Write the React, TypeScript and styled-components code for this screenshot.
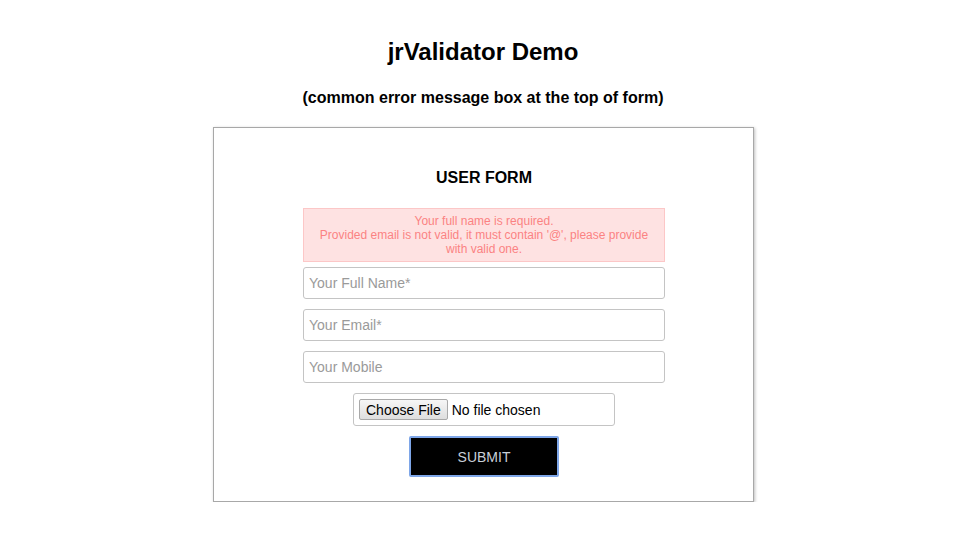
import React from "react";
import styled, { createGlobalStyle } from "styled-components";

const Global = createGlobalStyle`
  html, body { margin: 0; padding: 0; background: #fff; }
  body { font-family: "Liberation Sans", Arial, sans-serif; color: #000; }
`;

const Page = styled.div`
  display: flex;
  flex-direction: column;
  align-items: center;
  padding-top: 38px;
  padding-left: 2px;
`;

const Title = styled.h1`
  margin: 0;
  font-size: 24px;
  line-height: 28px;
  font-weight: bold;
`;

const Subtitle = styled.h4`
  margin: 23px 0 0;
  font-size: 16px;
  line-height: 18px;
  font-weight: bold;
`;

const FormCard = styled.form`
  margin-top: 20px;
  width: 537px;
  border: 1px solid #a8a8a8;
  box-shadow: 1px 1px 3px rgba(0, 0, 0, 0.25);
  padding: 41px 0 24px 2px;
  display: flex;
  flex-direction: column;
  align-items: center;
`;

const FormTitle = styled.h3`
  margin: 0;
  font-size: 16px;
  line-height: 18px;
  font-weight: bold;
`;

const ErrorBox = styled.div`
  margin-top: 21px;
  box-sizing: border-box;
  width: 362px;
  background: #fee2e2;
  border: 1px solid #fcc7c7;
  color: #fb8282;
  font-size: 12px;
  line-height: 14px;
  text-align: center;
  padding: 5px 10px;
`;

const Field = styled.input`
  box-sizing: border-box;
  width: 362px;
  height: 32px;
  margin-top: ${(p: { $first?: boolean }) => (p.$first ? "5px" : "10px")};
  border: 1px solid #c4c4c4;
  border-radius: 3px;
  padding: 0 5px;
  font-family: "Liberation Sans", Arial, sans-serif;
  font-size: 14px;
  color: #333;
  outline: none;
  &::placeholder { color: #9a9a9a; }
`;

const FileBox = styled.div`
  box-sizing: border-box;
  width: 262px;
  height: 33px;
  margin-top: 10px;
  border: 1px solid #c4c4c4;
  border-radius: 3px;
  display: flex;
  align-items: center;
  padding-left: 5px;
  gap: 4px;
  font-size: 14px;
`;

const ChooseButton = styled.span`
  box-sizing: border-box;
  height: 21px;
  padding: 0 6px;
  display: flex;
  align-items: center;
  border: 1px solid #a9a9a9;
  border-radius: 2px;
  background: linear-gradient(#f6f6f6, #dedede);
  font-size: 14px;
  color: #000;
`;

const FileText = styled.span`
  color: #000;
`;

const SubmitButton = styled.button`
  margin-top: 10px;
  box-sizing: border-box;
  width: 150px;
  height: 41px;
  background: #000;
  border: 2px solid #7ea6e8;
  border-radius: 2px;
  color: #c8cfd8;
  font-family: "Liberation Sans", Arial, sans-serif;
  font-size: 14px;
  cursor: pointer;
`;

export default function App() {
  return (
    <>
      <Global />
      <Page>
        <Title>jrValidator Demo</Title>
        <Subtitle>(common error message box at the top of form)</Subtitle>
        <FormCard onSubmit={(e) => e.preventDefault()}>
          <FormTitle>USER FORM</FormTitle>
          <ErrorBox>
            Your full name is required.
            <br />
            Provided email is not valid, it must contain '@', please provide with valid one.
          </ErrorBox>
          <Field $first placeholder="Your Full Name*" />
          <Field placeholder="Your Email*" />
          <Field placeholder="Your Mobile" />
          <FileBox>
            <ChooseButton>Choose File</ChooseButton>
            <FileText>No file chosen</FileText>
          </FileBox>
          <SubmitButton type="submit">SUBMIT</SubmitButton>
        </FormCard>
      </Page>
    </>
  );
}
